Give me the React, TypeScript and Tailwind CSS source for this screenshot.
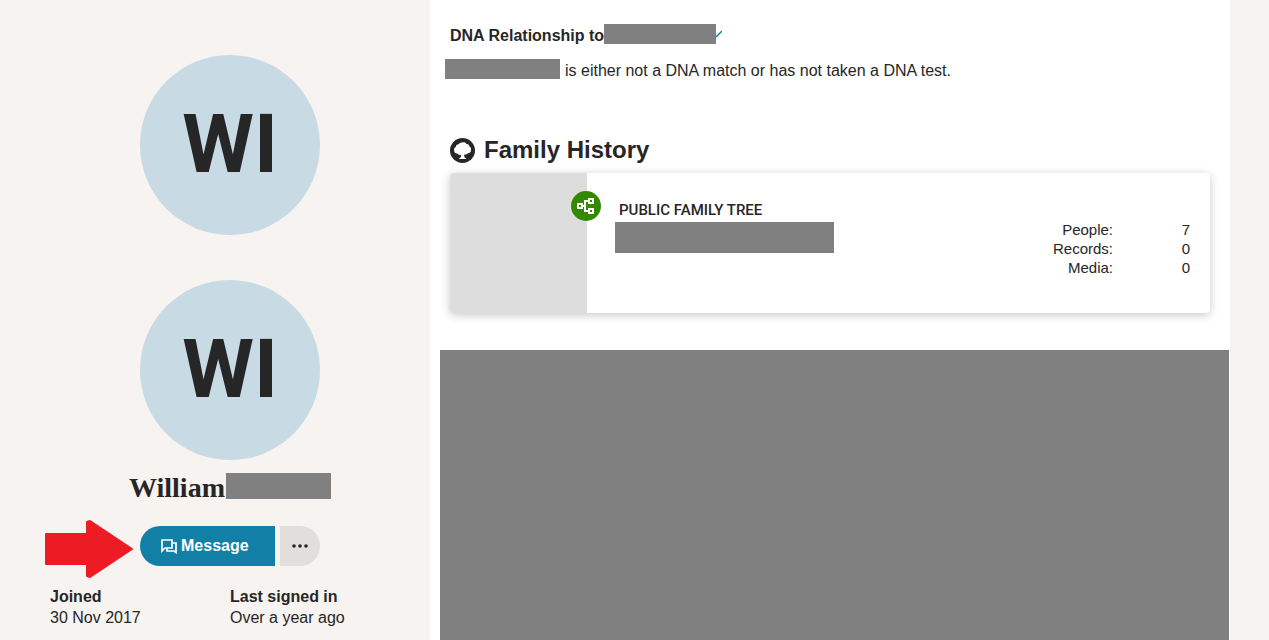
const STATS = [
  { label: "People:", value: 7 },
  { label: "Records:", value: 0 },
  { label: "Media:", value: 0 },
];

function Avatar({ initials }: { initials: string }) {
  return (
    <div className="flex size-[180px] items-center justify-center rounded-full bg-[#c8dae4] pb-0.5 font-[Roboto,sans-serif] text-[82px] leading-none font-bold">
      {initials}
    </div>
  );
}

function MessageIcon() {
  return (
    <svg width="16" height="16" viewBox="0 0 16 16" fill="none" stroke="currentColor" strokeWidth="2" aria-hidden="true">
      <path d="M1 13V2h10v8H4z" strokeWidth="1.7" />
      <path d="M12 5h3v9.5L13 13H6v-3" strokeWidth="1.7" />
    </svg>
  );
}

function TreeIcon() {
  return (
    <svg width="25" height="25" viewBox="0 0 25 25" aria-hidden="true">
      <circle cx="12.5" cy="12.5" r="12.5" fill="#262626" />
      <path
        fill="#fff"
        d="M12.4 4.6c1.6-.7 3.3 0 4 1.3 1.7-.2 3 1 3 2.6 1.4.6 2 2 1.5 3.4.3 1.8-1.1 3.4-3 3.3-1 1.3-2.3 1.7-3.6 1.2-.3 1.7-.1 3 1.9 3.9v.6H9.1v-.6c2-.8 2.3-2 1.9-3.6-1.5.6-2.9.1-3.6-1.1-1.9.1-3.4-1.3-3.2-3.1-.5-1.4.2-2.9 1.6-3.4 0-1.7 1.3-2.9 3-2.8.8-1.5 2.2-2.2 3.6-1.7z"
      />
    </svg>
  );
}

function PedigreeIcon() {
  return (
    <svg width="18" height="16" viewBox="0 0 18 16" fill="none" stroke="currentColor" strokeWidth="2" aria-hidden="true">
      <path d="M1 6h4v4H1zM12 1h4v4h-4zM12 11h4v4h-4z" />
      <path d="M5 8h3M12 3H8v10h4" />
    </svg>
  );
}

export default function ProfilePage() {
  return (
    <div className="flex min-h-screen bg-[#f6f3f0] font-['Liberation_Sans',Arial,sans-serif] text-base text-[#262626]">
      <aside className="w-[430px] shrink-0 pt-[55px]">
        <div className="flex flex-col items-center gap-[45px] pl-[30px]">
          <Avatar initials="WI" />
          <Avatar initials="WI" />
        </div>

        <div className="mt-2.5 flex h-8 items-center justify-center gap-px pl-[30px]">
          <h1 className="mt-1 font-['Liberation_Serif',serif] text-[28px] leading-8 font-bold">William</h1>
          <span className="h-[26px] w-[105px] bg-[#808080]" />
        </div>

        <div className="mt-[18px] flex h-[58px] items-center gap-[7px] pl-11">
          <svg width="89" height="58" viewBox="0 0 89 58" aria-hidden="true">
            <path
              d="M2 14h41V2l3-1 42 28-42 28-3-1V44H2z"
              fill="#ed1c24"
              stroke="#ed1c24"
              strokeWidth="2"
              strokeLinejoin="round"
            />
          </svg>
          <div className="-mt-[6px] flex h-10 gap-[5px]">
            <button
              type="button"
              className="flex w-[135px] items-center gap-1 rounded-l-full bg-[#127fa6] pl-[21px] font-bold text-white"
            >
              <MessageIcon />
              Message
            </button>
            <button
              type="button"
              aria-label="More options"
              className="flex w-10 items-center justify-center rounded-r-full bg-[#e0dfdc]"
            >
              <svg width="16" height="4" viewBox="0 0 16 4" fill="currentColor" aria-hidden="true">
                <circle cx="2" cy="2" r="1.8" />
                <circle cx="8" cy="2" r="1.8" />
                <circle cx="14" cy="2" r="1.8" />
              </svg>
            </button>
          </div>
        </div>

        <dl className="mt-2 grid grid-cols-[180px_1fr] pl-[50px] leading-[21px]">
          <div>
            <dt className="font-bold">Joined</dt>
            <dd>30 Nov 2017</dd>
          </div>
          <div>
            <dt className="font-bold">Last signed in</dt>
            <dd>Over a year ago</dd>
          </div>
        </dl>
      </aside>

      <main className="flex max-w-[800px] flex-1 flex-col bg-white pt-6">
        <div className="flex h-5 items-center pl-5">
          <h2 className="mt-1 w-[154px] font-bold whitespace-nowrap">DNA Relationship to</h2>
          <span className="h-5 w-[112px] bg-[#808080]" />
          <svg width="6" height="8" viewBox="0 0 6 8" fill="none" stroke="#127fa6" strokeWidth="1.5" aria-hidden="true">
            <path d="M0 7l6-6" />
          </svg>
        </div>

        <div className="mt-[15px] flex h-5 items-center gap-[5px] pl-[15px]">
          <span className="h-5 w-[115px] bg-[#808080]" />
          <p className="mt-1">is either not a DNA match or has not taken a DNA test.</p>
        </div>

        <div className="mt-[55px] flex h-8 items-center gap-[9px] pl-5">
          <TreeIcon />
          <h2 className="text-2xl font-bold">Family History</h2>
        </div>

        <section className="mx-5 mt-[7px] flex h-[140px] rounded-sm bg-white shadow-[0_2px_10px_rgba(0,0,0,0.22)]">
          <div className="relative w-[137px] shrink-0 rounded-l-sm bg-[#ddd]">
            <span className="absolute top-[18px] -right-[14px] flex size-[30px] items-center justify-center rounded-full bg-[#338a00] text-white">
              <PedigreeIcon />
            </span>
          </div>
          <div className="flex-1 pt-[27px] pl-7">
            <h3 className="pl-1 font-[Roboto,sans-serif] text-[15px] leading-5 font-medium">PUBLIC FAMILY TREE</h3>
            <div className="mt-0.5 h-[31px] w-[219px] bg-[#808080]" />
          </div>
          <table className="mt-[47px] mr-5 self-start text-right text-[15px] leading-[19px]">
            <tbody>
              {STATS.map((stat) => (
                <tr key={stat.label}>
                  <th scope="row" className="p-0 text-right font-normal">
                    {stat.label}
                  </th>
                  <td className="w-[77px] p-0">{stat.value}</td>
                </tr>
              ))}
            </tbody>
          </table>
        </section>

        <div className="mt-[37px] mr-px ml-2.5 flex-1 bg-[#808080]" />
      </main>
    </div>
  );
}
